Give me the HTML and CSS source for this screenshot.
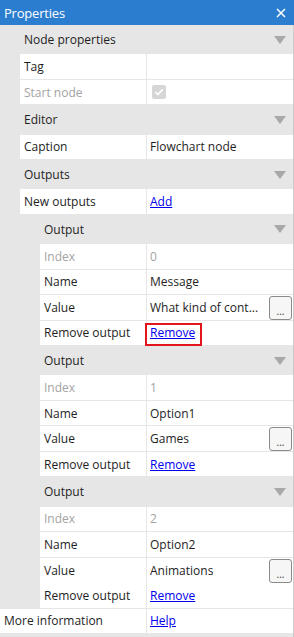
FILE: index.html
```html
<!DOCTYPE html>
<html lang="en">

<head>
    <meta charset="UTF-8">
    <meta name="viewport" content="width=device-width, initial-scale=1.0">
    <title>Properties</title>
    <link rel="stylesheet" href="styles.css">
</head>

<body>
    <div class="panel">
        <div class="titlebar">
            <span class="title">Properties</span>
            <svg class="close" width="10" height="10" viewBox="0 0 10 10">
                <path d="M1 1L9 9M9 1L1 9" stroke="#fff" stroke-width="1.5" fill="none" />
            </svg>
        </div>

        <div class="props">
            <!-- Node properties -->
            <div class="group">
                <div class="group-head"><span>Node properties</span><i class="caret"></i></div>
                <div class="row">
                    <div class="label">Tag</div>
                    <div class="value"></div>
                </div>
                <div class="row disabled">
                    <div class="label">Start node</div>
                    <div class="value">
                        <span class="check">
                            <svg width="14" height="14" viewBox="0 0 14 14">
                                <path d="M3.5 7.2L6 9.6L10.6 4.4" stroke="#fff" stroke-width="1.6" fill="none" />
                            </svg>
                        </span>
                    </div>
                </div>
            </div>

            <!-- Editor -->
            <div class="group">
                <div class="group-head"><span>Editor</span><i class="caret"></i></div>
                <div class="row">
                    <div class="label">Caption</div>
                    <div class="value">Flowchart node</div>
                </div>
            </div>

            <!-- Outputs -->
            <div class="group">
                <div class="group-head"><span>Outputs</span><i class="caret"></i></div>
                <div class="row">
                    <div class="label">New outputs</div>
                    <div class="value"><a href="#">Add</a></div>
                </div>

                <div class="group">
                    <div class="group-head"><span>Output</span><i class="caret"></i></div>
                    <div class="row disabled">
                        <div class="label">Index</div>
                        <div class="value">0</div>
                    </div>
                    <div class="row">
                        <div class="label">Name</div>
                        <div class="value">Message</div>
                    </div>
                    <div class="row">
                        <div class="label">Value</div>
                        <div class="value has-btn">
                            <span class="text">What kind of cont...</span>
                            <button class="dots">...</button>
                        </div>
                    </div>
                    <div class="row">
                        <div class="label">Remove output</div>
                        <div class="value"><a href="#">Remove</a><span class="highlight"></span></div>
                    </div>
                </div>

                <div class="group">
                    <div class="group-head"><span>Output</span><i class="caret"></i></div>
                    <div class="row disabled">
                        <div class="label">Index</div>
                        <div class="value">1</div>
                    </div>
                    <div class="row">
                        <div class="label">Name</div>
                        <div class="value">Option1</div>
                    </div>
                    <div class="row">
                        <div class="label">Value</div>
                        <div class="value has-btn">
                            <span class="text">Games</span>
                            <button class="dots">...</button>
                        </div>
                    </div>
                    <div class="row">
                        <div class="label">Remove output</div>
                        <div class="value"><a href="#">Remove</a></div>
                    </div>
                </div>

                <div class="group">
                    <div class="group-head"><span>Output</span><i class="caret"></i></div>
                    <div class="row disabled">
                        <div class="label">Index</div>
                        <div class="value">2</div>
                    </div>
                    <div class="row">
                        <div class="label">Name</div>
                        <div class="value">Option2</div>
                    </div>
                    <div class="row">
                        <div class="label">Value</div>
                        <div class="value has-btn">
                            <span class="text">Animations</span>
                            <button class="dots">...</button>
                        </div>
                    </div>
                    <div class="row">
                        <div class="label">Remove output</div>
                        <div class="value"><a href="#">Remove</a></div>
                    </div>
                </div>
            </div>

            <div class="row">
                <div class="label">More information</div>
                <div class="value"><a href="#">Help</a></div>
            </div>
        </div>
    </div>
</body>

</html>
```

FILE: styles.css
```css
body {
    margin: 0;
    padding: 0;
    background-color: #e6e6e6;
    font-family: "Open Sans", "Noto Sans", sans-serif;
    font-size: 12px;
    color: #1e1e1e;
}

.panel {
    width: 294px;
}

.titlebar {
    height: 25px;
    background-color: #2b7dcf;
    color: white;
    display: flex;
    align-items: center;
    justify-content: space-between;
    padding: 0 8px 0 4px;
}

.title {
    font-size: 13px;
    letter-spacing: -0.2px;
}

.props {
    border-right: 1px solid #cdcdcd;
    padding-bottom: 3px;
}

/* Groups and rows */
.group {
    padding-left: 20px;
}

.group-head {
    height: 29.25px;
    display: flex;
    align-items: center;
    justify-content: space-between;
    padding-left: 4px;
    padding-right: 7px;
}

.caret {
    width: 0;
    height: 0;
    border-left: 6.5px solid transparent;
    border-right: 6.5px solid transparent;
    border-top: 8px solid #a8a8a8;
}

.row {
    display: grid;
    grid-template-columns: 146px minmax(0, 1fr);
    column-gap: 1px;
    height: 24.5px;
    margin-bottom: 1px;
}

.group > .row {
    grid-template-columns: 126px minmax(0, 1fr);
}

.group .group > .row {
    grid-template-columns: 106px minmax(0, 1fr);
}

.label,
.value {
    background-color: white;
    display: flex;
    align-items: center;
    white-space: nowrap;
}

.label {
    padding-left: 4px;
}

.value {
    padding-left: 3px;
    position: relative;
}

.disabled .label,
.disabled .value {
    color: #a3a3a3;
}

.value a {
    color: #0000ee;
}

.check {
    width: 14px;
    height: 14px;
    border-radius: 2px;
    background-color: #d6d6d6;
    margin-left: 2px;
}

.check svg {
    display: block;
}

.has-btn {
    justify-content: space-between;
    padding-right: 1px;
}

.has-btn .text {
    min-width: 0;
    overflow: hidden;
    margin-right: 4px;
}

.dots {
    flex: none;
    width: 23px;
    height: 24px;
    margin-top: 1px;
    padding: 6px 0 0;
    border: 1px solid #8a8a8a;
    border-radius: 3px;
    background-color: #f6f6f6;
    font-family: inherit;
    font-size: 10px;
    color: #333;
}

/* Highlight box round the first Remove link */
.highlight {
    position: absolute;
    left: -2px;
    top: 2px;
    bottom: -1px;
    width: 57px;
    border: 2px solid #e3161e;
    box-sizing: border-box;
}
```
